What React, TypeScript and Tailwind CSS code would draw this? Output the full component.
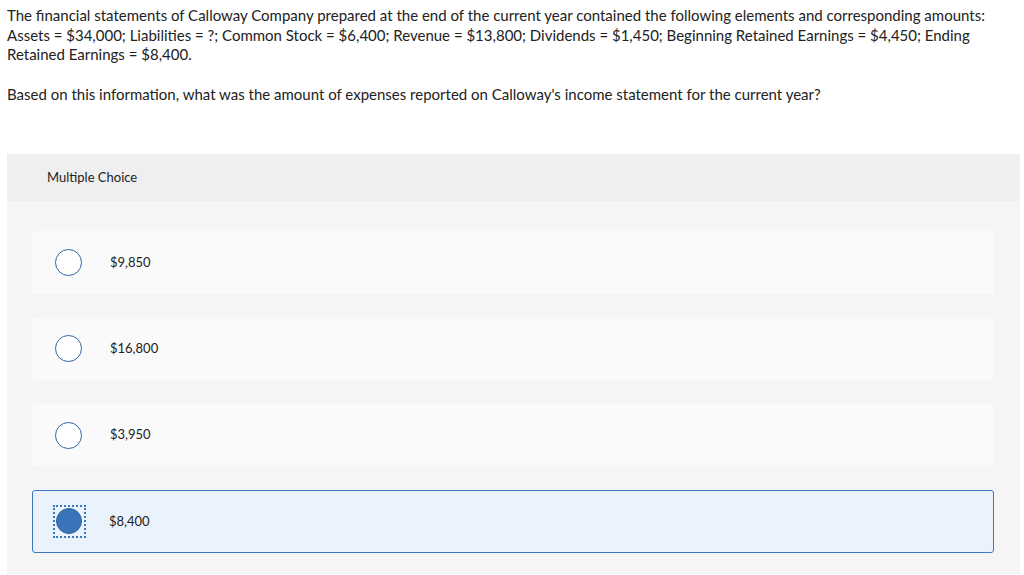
import React from "react";

const options = [
  { label: "$9,850", selected: false },
  { label: "$16,800", selected: false },
  { label: "$3,950", selected: false },
  { label: "$8,400", selected: true },
];

export default function App() {
  return (
    <div
      className="w-[1024px] h-[575px] bg-white overflow-hidden text-[#222]"
      style={{ fontFamily: "Lato, 'Open Sans', sans-serif" }}
    >
      <div className="pl-[7px] pr-[20px] pt-[6px] text-[15px] leading-[19.5px]">
        <p>
          The financial statements of Calloway Company prepared at the end of the current year contained the following elements and corresponding amounts: Assets = $34,000; Liabilities = ?; Common Stock = $6,400; Revenue = $13,800; Dividends = $1,450; Beginning Retained Earnings = $4,450; Ending Retained Earnings = $8,400.
        </p>
        <p className="mt-[20px]">
          Based on this information, what was the amount of expenses reported on Calloway's income statement for the current year?
        </p>
      </div>
      <div className="ml-[7px] mr-[4px] mt-[50px] bg-[#f5f5f5] h-[420px]">
        <div className="h-[47px] bg-[#efefef] flex items-center pl-[40px] text-[13px] text-[#222]">
          Multiple Choice
        </div>
        <div className="flex flex-col gap-[23.3px] pt-[30px] pl-[25px] pr-[26px]">
          {options.map((o) => (
            <div
              key={o.label}
              className={
                o.selected
                  ? "h-[63px] rounded-[3px] border border-[#3b78c3] bg-[#eaf2fb] flex items-center"
                  : "h-[63px] rounded-[3px] bg-[#fafafa] flex items-center"
              }
            >
              <div className={o.selected ? "w-[72px] flex justify-center" : "w-[73px] flex justify-center"}>
                {o.selected ? (
                  <div className="w-[33px] h-[33px] border-2 border-dotted border-[#3b78c3] flex items-center justify-center">
                    <div className="w-[26px] h-[26px] rounded-full bg-[#3a74b8] border border-[#2e619e]" />
                  </div>
                ) : (
                  <div className="w-[27px] h-[27px] rounded-full bg-white border border-[#2f64a3]" />
                )}
              </div>
              <span className={o.selected ? "ml-[4px] text-[13px]" : "ml-[5px] text-[13px]"}>{o.label}</span>
            </div>
          ))}
        </div>
      </div>
    </div>
  );
}
